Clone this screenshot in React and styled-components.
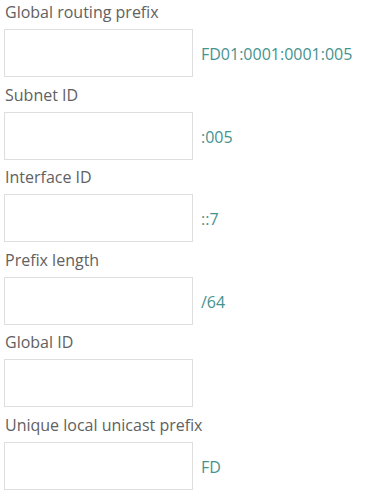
import React from 'react';
import styled, { createGlobalStyle } from 'styled-components';

const GlobalStyle = createGlobalStyle`
    body {
        margin: 0;
        background: #fff;
        font-family: "Open Sans", "Liberation Sans", sans-serif;
    }
`;

const Form = styled.div`
    display: flex;
    flex-direction: column;
    padding: 0 4px;
`;

const Field = styled.div`
    display: flex;
    flex-direction: column;
    height: 82.6px;
`;

const Label = styled.label`
    font-size: 16px;
    line-height: 22px;
    color: #616161;
    padding: 1px 0 0 1px;
    height: 29px;
    box-sizing: border-box;
`;

const Row = styled.div`
    display: flex;
    align-items: center;
    gap: 8px;
`;

const Box = styled.input`
    width: 189px;
    height: 48px;
    box-sizing: border-box;
    border: 1px solid #dedede;
    border-radius: 0;
    background: #fff;
    margin: 0;
    padding: 0 8px;
    outline: none;
`;

const Value = styled.span`
    font-size: 16px;
    color: #459390;
    padding-top: 2px;
`;

const fields = [
    { label: 'Global routing prefix', value: 'FD01:0001:0001:005' },
    { label: 'Subnet ID', value: ':005' },
    { label: 'Interface ID', value: '::7' },
    { label: 'Prefix length', value: '/64' },
    { label: 'Global ID', value: '' },
    { label: 'Unique local unicast prefix', value: 'FD' },
];

const App = () => (
    <>
        <GlobalStyle />
        <Form>
            {fields.map((f) => (
                <Field key={f.label}>
                    <Label>{f.label}</Label>
                    <Row>
                        <Box type="text" />
                        {f.value && <Value>{f.value}</Value>}
                    </Row>
                </Field>
            ))}
        </Form>
    </>
);

export default App;
